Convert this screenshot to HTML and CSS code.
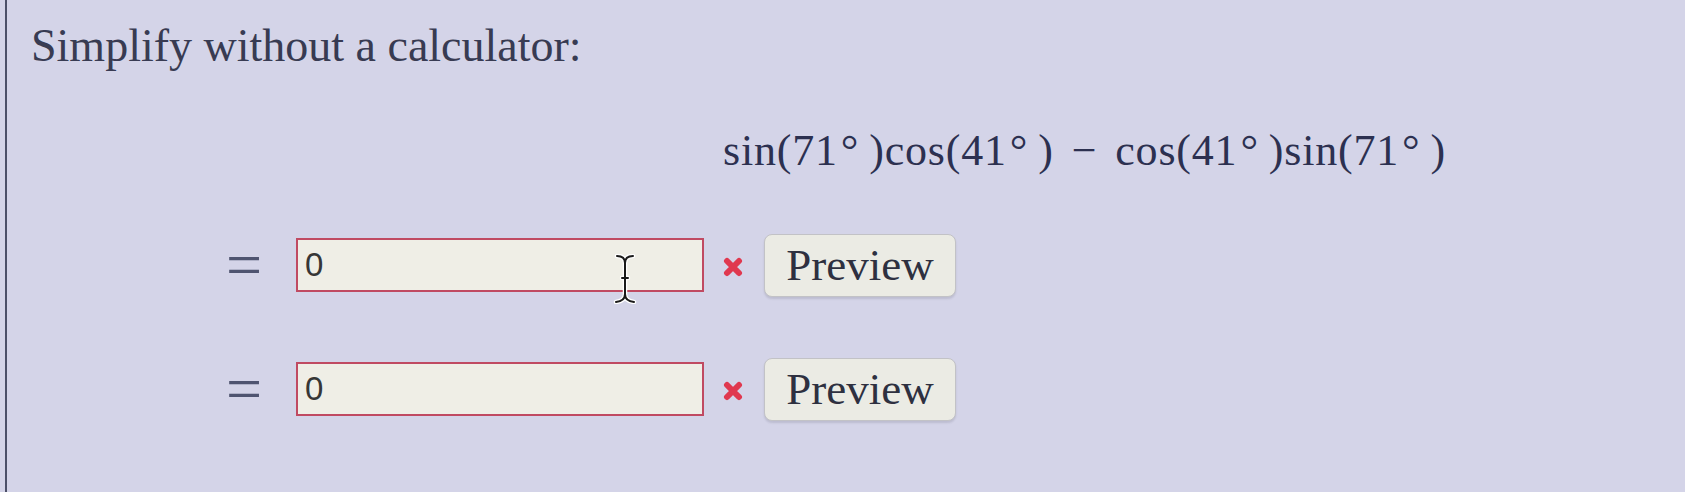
FILE: index.html
```html
<!DOCTYPE html>
<html lang="en">
<head>
<meta charset="utf-8">
<title>Simplify without a calculator</title>
<link rel="stylesheet" href="styles.css">
</head>
<body>
<div class="sheet">
  <div class="prompt">Simplify without a calculator:</div>
  <div class="math-line">
    <span class="math"><span class="fn">sin</span><span class="par">(</span>71<span class="deg">°</span><span class="par">)</span><span class="fn">cos</span><span class="par">(</span>41<span class="deg">°</span><span class="par">)</span><span class="minus">−</span><span class="fn">cos</span><span class="par">(</span>41<span class="deg">°</span><span class="par">)</span><span class="fn">sin</span><span class="par">(</span>71<span class="deg">°</span><span class="par">)</span></span>
  </div>
  <div class="answer-row">
    <span class="eq">=</span>
    <span class="field">
      <input class="answer" type="text" value="0">
      <svg class="ibeam" width="26" height="50" viewBox="0 0 26 50" aria-hidden="true">
        <g fill="none" stroke-linecap="round" stroke-linejoin="round">
          <path d="M5 2 Q13 2 13 9 Q13 2 21 2 M13 9 V40 M10 24 H16 M4 48 Q13 47 13 40 Q13 47 22 48" stroke="#ffffff" stroke-width="4.5"/>
          <path d="M5 2 Q13 2 13 9 Q13 2 21 2 M13 9 V40 M10 24 H16 M4 48 Q13 47 13 40 Q13 47 22 48" stroke="#1a1a1a" stroke-width="2"/>
        </g>
      </svg>
    </span>
    <svg class="xmark" width="22" height="20" viewBox="0 0 22 20" aria-hidden="true">
      <path d="M5 4 L17 16 M17 4 L5 16" stroke="#e0384f" stroke-width="6" stroke-linecap="round"/>
    </svg>
    <button class="preview" type="button">Preview</button>
  </div>
  <div class="answer-row">
    <span class="eq">=</span>
    <span class="field">
      <input class="answer" type="text" value="0">
    </span>
    <svg class="xmark" width="22" height="20" viewBox="0 0 22 20" aria-hidden="true">
      <path d="M5 4 L17 16 M17 4 L5 16" stroke="#e0384f" stroke-width="6" stroke-linecap="round"/>
    </svg>
    <button class="preview" type="button">Preview</button>
  </div>
</div>
</body>
</html>
```

FILE: styles.css
```css
html, body {
  margin: 0;
  padding: 0;
}

body {
  background: #d4d4e8;
  width: 1685px;
  height: 492px;
  overflow: hidden;
  font-family: "Liberation Serif", "Times New Roman", serif;
}

.sheet {
  margin-left: 5px;
  border-left: 2px solid #4c5068;
  height: 492px;
  padding-top: 23px;
  box-sizing: border-box;
}

.prompt {
  font-size: 46px;
  line-height: 46px;
  color: #383b52;
  padding-left: 24px;
}

.math-line {
  margin-top: 60px;
  padding-left: 716px;
  height: 44px;
  display: flex;
}

.math {
  font-size: 44px;
  line-height: 44px;
  color: #2c3050;
  letter-spacing: 0.8px;
  white-space: nowrap;
}

.deg {
  margin-left: 3px;
  margin-right: 10px;
}

.minus {
  margin: 0 18px;
}

.answer-row {
  display: flex;
  align-items: center;
  height: 64px;
  margin-top: 60px;
  padding-left: 219px;
}

.math-line + .answer-row {
  margin-top: 60px;
}

.eq {
  width: 70px;
  font-size: 64px;
  line-height: 64px;
  color: #4f5470;
}

.field {
  position: relative;
  display: flex;
}

.answer {
  width: 408px;
  height: 54px;
  box-sizing: border-box;
  border: 2px solid #c04a62;
  background: #efeee6;
  padding: 0 0 0 7px;
  margin: 0;
  font-family: "Liberation Sans", Arial, sans-serif;
  font-size: 33px;
  color: #363636;
  outline: none;
}

.ibeam {
  position: absolute;
  left: 316px;
  top: 16px;
}

.xmark {
  margin-left: 18px;
  margin-top: 4px;
  flex: none;
}

.preview {
  margin-left: 20px;
  width: 192px;
  height: 63px;
  box-sizing: border-box;
  border: 1px solid #c2c2c6;
  border-radius: 8px;
  background: #ebebe4;
  box-shadow: 0 2px 2px rgba(60, 60, 80, 0.15);
  font-family: "Liberation Serif", "Times New Roman", serif;
  font-size: 45px;
  color: #2e3040;
  padding: 0;
  line-height: 1;
}
```
